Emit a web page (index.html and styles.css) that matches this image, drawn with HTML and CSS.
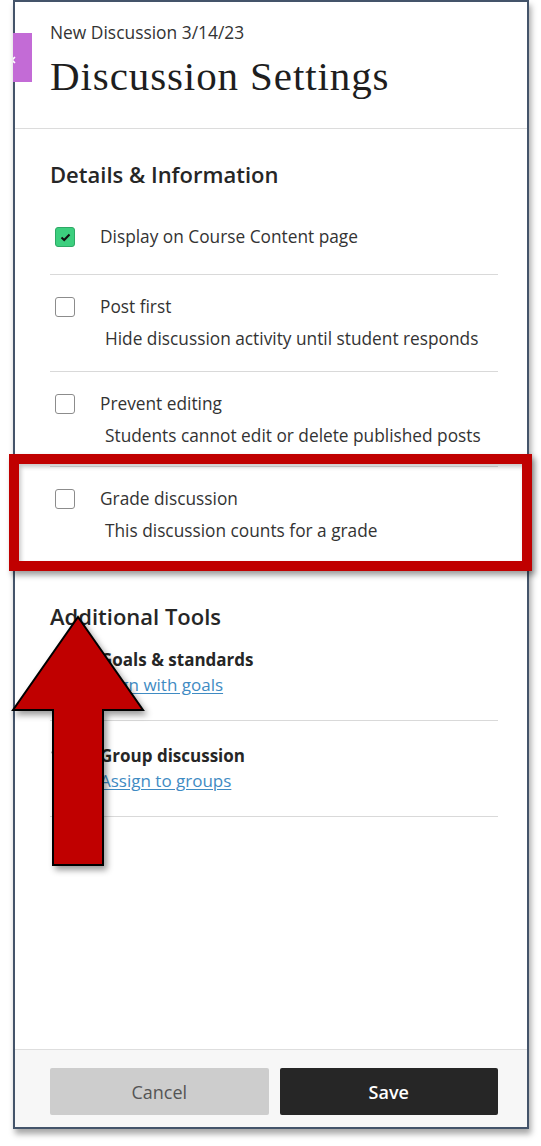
FILE: index.html
```html
<!DOCTYPE html>
<html lang="en">
<head>
<meta charset="utf-8">
<title>Discussion Settings</title>
<link rel="stylesheet" href="styles.css">
</head>
<body>
<div class="stage">
  <div class="panel">
    <div class="side-tab">
      <svg width="6" height="10" viewBox="0 0 6 10"><polyline points="4,2 1,5 4,8" fill="none" stroke="#fff" stroke-width="1.6"/></svg>
    </div>
    <header class="header">
      <div class="subtitle">New Discussion 3/14/23</div>
      <h1 class="title">Discussion Settings</h1>
    </header>

    <main class="content">
      <h2 class="section-title">Details &amp; Information</h2>

      <div class="option option-first">
        <div class="option-row">
          <span class="checkbox checked">
            <svg width="11" height="9" viewBox="0 0 11 9"><polyline points="1.5,4.5 4.2,7 9.5,1.5" fill="none" stroke="#111" stroke-width="2"/></svg>
          </span>
          <span class="option-label">Display on Course Content page</span>
        </div>
      </div>

      <div class="option">
        <div class="option-row">
          <span class="checkbox"></span>
          <span class="option-label">Post first</span>
        </div>
        <div class="option-desc">Hide discussion activity until student responds</div>
      </div>

      <div class="option option-third">
        <div class="option-row">
          <span class="checkbox"></span>
          <span class="option-label">Prevent editing</span>
        </div>
        <div class="option-desc">Students cannot edit or delete published posts</div>
      </div>

      <div class="option option-last">
        <div class="option-row">
          <span class="checkbox"></span>
          <span class="option-label">Grade discussion</span>
        </div>
        <div class="option-desc">This discussion counts for a grade</div>
      </div>

      <h2 class="section-title tools-title">Additional Tools</h2>

      <div class="tool tool-first">
        <span class="tool-icon">
          <svg width="20" height="20" viewBox="0 0 20 20"><circle cx="10" cy="10" r="8" fill="none" stroke="#262626" stroke-width="1.6"/><circle cx="10" cy="10" r="4" fill="none" stroke="#262626" stroke-width="1.6"/><circle cx="10" cy="10" r="1.2" fill="#262626"/></svg>
        </span>
        <div class="tool-text">
          <div class="tool-label">Goals &amp; standards</div>
          <a class="tool-link" href="#">Align with goals</a>
        </div>
      </div>

      <div class="tool">
        <span class="tool-icon">
          <svg width="20" height="20" viewBox="0 0 20 20"><path d="M5 4.5c-1.6 0-2.6 1-2.6 2.2 0 2.6 5 1.6 5 4.3 0 1.3-1.1 2.2-2.6 2.2" fill="none" stroke="#262626" stroke-width="1.6"/><circle cx="13" cy="6" r="2.6" fill="none" stroke="#262626" stroke-width="1.6"/><path d="M8.5 16c0.5-2.6 2.3-4 4.5-4s4 1.4 4.5 4" fill="none" stroke="#262626" stroke-width="1.6"/></svg>
        </span>
        <div class="tool-text">
          <div class="tool-label">Group discussion</div>
          <a class="tool-link" href="#">Assign to groups</a>
        </div>
      </div>
    </main>

    <footer class="footer">
      <button class="btn btn-cancel" type="button">Cancel</button>
      <button class="btn btn-save" type="button">Save</button>
    </footer>
  </div>

  <div class="highlight-box"></div>
  <svg class="arrow" width="541" height="1146" viewBox="0 0 541 1146">
    <polygon points="78,617 143,710 103,710 103,865 53,865 53,710 13,710" fill="#c00000" stroke="#000" stroke-width="2" stroke-linejoin="miter"/>
  </svg>
</div>
</body>
</html>
```

FILE: styles.css
```css
* {
  box-sizing: border-box;
}

html, body {
  margin: 0;
  padding: 0;
  background: #ffffff;
}

body {
  font-family: "Open Sans", "Noto Sans", "Liberation Sans", sans-serif;
  color: #262626;
}

.stage {
  position: relative;
  width: 541px;
  height: 1146px;
  overflow: hidden;
}

.panel {
  position: relative;
  margin-left: 13px;
  width: 516px;
  height: 1129px;
  border: 2px solid #44546a;
  background: #ffffff;
  box-shadow: 2px 5px 6px rgba(0, 0, 0, 0.35);
  display: flex;
  flex-direction: column;
}

.side-tab {
  position: absolute;
  left: -2px;
  top: 31px;
  width: 19px;
  height: 49px;
  background: #c36bd6;
  display: flex;
  align-items: center;
  justify-content: flex-start;
  overflow: hidden;
}

.side-tab svg {
  margin-left: -2px;
  margin-top: 4px;
}

.header {
  padding: 18px 29px 28px 35px;
  border-bottom: 1px solid #dcdcdc;
}

.subtitle {
  font-size: 17.4px;
  line-height: 24px;
  color: #333333;
}

.title {
  margin: 8px 0 0;
  font-family: "Liberation Serif", "DejaVu Serif", serif;
  font-weight: 400;
  font-size: 41px;
  letter-spacing: 0.9px;
  line-height: 48px;
  color: #1e1e1e;
}

.content {
  flex: 1;
  padding: 0 29px 0 35px;
}

.section-title {
  margin: 31px 0 0;
  font-size: 22px;
  font-weight: 600;
  line-height: 28px;
  color: #262626;
}

.option {
  padding: 20px 0 20px;
  border-bottom: 1px solid #d9d9d9;
}

.option-first {
  padding: 37px 0 25px;
}

.option-third {
  padding-bottom: 18px;
}

.option-last {
  border-bottom: none;
  padding-bottom: 0;
}

.option-row {
  display: flex;
  align-items: center;
  height: 24px;
}

.checkbox {
  width: 20px;
  height: 20px;
  margin-left: 5px;
  margin-right: 25px;
  border: 1.5px solid #8c8c8c;
  border-radius: 3px;
  background: #ffffff;
  display: flex;
  align-items: center;
  justify-content: center;
  flex: none;
}

.checkbox.checked {
  background: #3ccf7e;
  border-color: #2ea865;
}

.option-label {
  font-size: 17.3px;
  line-height: 24px;
  color: #333333;
}

.option-desc {
  margin-top: 8px;
  padding-left: 55px;
  font-size: 17.3px;
  line-height: 24px;
  color: #333333;
}

.tools-title {
  margin-top: 59px;
}

.tool {
  display: flex;
  align-items: flex-start;
  padding: 23px 0 23px;
  border-bottom: 1px solid #d9d9d9;
}

.tool-first {
  padding-top: 18px;
}

.tool-icon {
  width: 50px;
  height: 24px;
  display: flex;
  align-items: center;
  flex: none;
}

.tool-text {
  display: flex;
  flex-direction: column;
}

.tool-label {
  font-size: 17px;
  font-weight: 700;
  line-height: 24px;
  color: #262626;
}

.tool-link {
  margin-top: 1px;
  font-size: 17px;
  line-height: 24px;
  color: #3f8bc3;
  text-decoration: underline;
  text-underline-offset: 2px;
}

.footer {
  display: flex;
  gap: 11px;
  padding: 18px 29px 12px 35px;
  background: #f7f7f7;
  border-top: 1px solid #dedede;
}

.btn {
  flex: 1;
  height: 47px;
  border: none;
  border-radius: 2px;
  font-family: "Open Sans", "Noto Sans", sans-serif;
  font-size: 18px;
}

.btn-cancel {
  background: #cdcdcd;
  color: #555555;
}

.btn-save {
  background: #262626;
  color: #ffffff;
  font-weight: 600;
}

.highlight-box {
  position: absolute;
  left: 9px;
  top: 454px;
  width: 523px;
  height: 117px;
  border: 10px solid #c00000;
  box-shadow: 3px 4px 6px rgba(0, 0, 0, 0.4), inset 2px 3px 4px rgba(0, 0, 0, 0.22);
  pointer-events: none;
}

.arrow {
  position: absolute;
  left: 0;
  top: 0;
  pointer-events: none;
  filter: drop-shadow(3px 4px 3px rgba(0, 0, 0, 0.4));
}
```
